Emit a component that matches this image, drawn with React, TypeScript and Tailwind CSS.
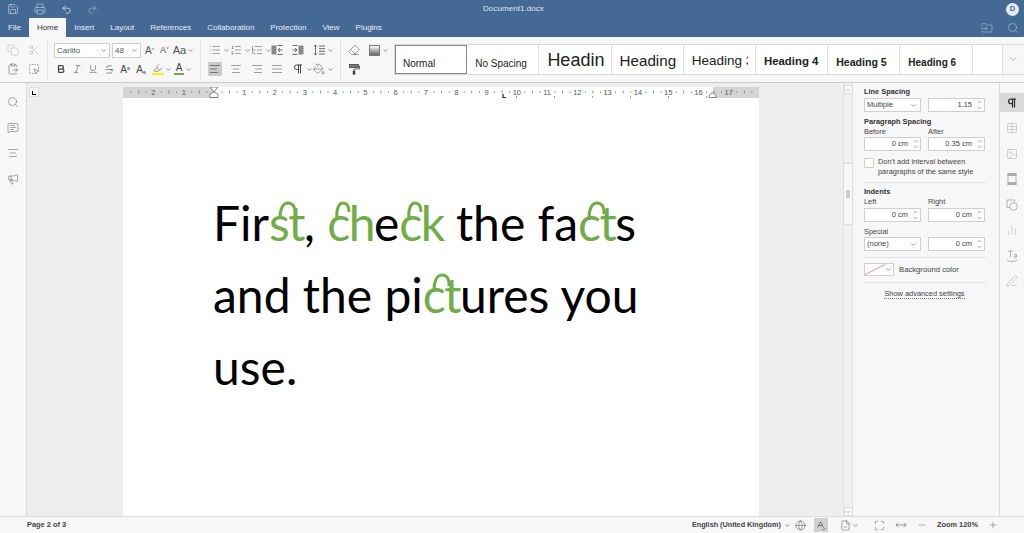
import { ChevronDown, ChevronUp, Search, Scissors, Undo2, Redo2, Save, Printer, Eraser, Globe, Minus, Plus, MessageSquareText, AlignCenter, AlignLeft, AlignRight, AlignJustify, Bold, Italic, Underline, Strikethrough, List, ListOrdered, ListTree, Copy, ClipboardPaste, SquareDashedMousePointer, Pilcrow, PaintBucket, FolderInput, Table, Image, ChartNoAxesColumn, Megaphone, FileCheck, Maximize, MoveHorizontal, SpellCheck, PenLine, Highlighter } from 'lucide-react';
import type { ReactNode } from 'react';

const tabs = ['File', 'Home', 'Insert', 'Layout', 'References', 'Collaboration', 'Protection', 'View', 'Plugins'];

const Chev = () => <ChevronDown className="w-[7px] h-[7px] text-[#555] shrink-0" strokeWidth={2} />;

const Cell = ({ children, chev, active, w = 'w-[20.800px]' }: { children: ReactNode; chev?: boolean; active?: boolean; w?: string }) => (
  <div className={`${w} h-[16px] flex items-center gap-[1px] pl-[1px] text-[#444] shrink-0`}>
    <div className={`w-[14px] h-[14px] flex items-center justify-center rounded-[1px] shrink-0 ${active ? 'bg-[#cbcbcb]' : ''}`}>{children}</div>
    {chev && <Chev />}
  </div>
);

const ic = 'w-[12px] h-[12px]';

const Sep = () => <div className="w-px h-[38px] bg-[#dfdfdf] shrink-0" />;

// small hand drawn icons, lucide has no close match for these
const IndentIcon = ({ flip }: { flip?: boolean }) => (
  <svg width="12" height="12" viewBox="0 0 12 12" className={flip ? '-scale-x-100' : ''}>
    <rect x="6.500" y="1.500" width="5" height="9" fill="#888" />
    <path d="M0.500 1.500h5M0.500 10.500h5M0.500 6h4M3 4l2 2-2 2" fill="none" stroke="#444" strokeWidth="0.800" />
  </svg>
);

const LineSpacingIcon = () => (
  <svg width="12" height="12" viewBox="0 0 12 12" fill="none" stroke="#444" strokeWidth="0.800">
    <path d="M2.500 1v10M1 2.500 2.500 1 4 2.500M1 9.500 2.500 11 4 9.500M6 2h6M6 4.700h6M6 7.300h6M6 10h6" />
  </svg>
);

const RollerIcon = () => (
  <svg width="12" height="12" viewBox="0 0 12 12" fill="none" stroke="#444">
    <rect x="1.500" y="1.500" width="9" height="3" fill="#777" strokeWidth="0.800" />
    <path d="M10.500 3h1v3H6v2" strokeWidth="0.800" />
    <rect x="5" y="8" width="2" height="3.500" fill="#444" strokeWidth="0.500" />
  </svg>
);

const ShapeIcon = () => (
  <svg width="12" height="12" viewBox="0 0 12 12" fill="none" stroke="#aaa" strokeWidth="0.900">
    <path d="M5 8.500H1V1h7.500v3.500" />
    <circle cx="7.500" cy="7.500" r="3.800" fill="#f7f7f7" />
  </svg>
);

const HeaderIcon = () => (
  <svg width="12" height="12" viewBox="0 0 12 12" fill="none" stroke="#aaa" strokeWidth="0.900">
    <rect x="2" y="0.500" width="8" height="11" />
    <rect x="2" y="0.500" width="8" height="2" fill="#aaa" />
    <rect x="2" y="9.500" width="8" height="2" fill="#aaa" />
  </svg>
);

const ArtIcon = () => (
  <svg width="12" height="12" viewBox="0 0 12 12" fill="none" stroke="#aaa" strokeWidth="0.900">
    <path d="M2 1h5M4.500 1v6.500M8 4.500h2.500v3M10.500 6H8.500v1.500h2M1 10c2.500 2 7.500 2 10 0" />
  </svg>
);

const galleryItems = [
  { label: 'Normal', cls: 'text-[10px] pt-[9px]' },
  { label: 'No Spacing', cls: 'text-[10px] pt-[9px]' },
  { label: 'Heading 1', cls: 'text-[18px] pt-[5px]' },
  { label: 'Heading 2', cls: 'text-[15.200px] pt-[6px]' },
  { label: 'Heading 3', cls: 'text-[13.500px] pt-[6px]' },
  { label: 'Heading 4', cls: 'text-[11.400px] font-bold pt-[6px]' },
  { label: 'Heading 5', cls: 'text-[10.600px] font-bold pt-[7px]' },
  { label: 'Heading 6', cls: 'text-[10px] font-bold pt-[8px]' },
];

const Ruler = () => {
  const marks = [];
  for (let i = -11; i <= 71; i++) {
    const x = 91 + i * 7.57;
    const cm = i / 4;
    if (Number.isInteger(cm)) {
      if (cm !== 0) marks.push(<text key={i} x={x} y={8} fontSize="7.5" fill="#555" textAnchor="middle" fontFamily="Liberation Sans">{Math.abs(cm)}</text>);
    } else {
      const long = i % 4 === 2 || i % 4 === -2;
      marks.push(<rect key={i} x={x} y={long ? 3.5 : 4.5} width="0.8" height={long ? 3 : 1.5} fill="#777" />);
    }
  }
  return (
    <svg width="636" height="11" viewBox="0 0 636 11" className="block">
      <rect width="636" height="11" fill="#d4d4d4" />
      <rect x="91" width="499" height="11" fill="#fff" />
      {marks}
      {[393, 431, 469, 507, 545, 583].map((x) => <rect key={x} x={x} y="9" width="0.8" height="2" fill="#888" />)}
      <path d="M87 0h8l-4 5zM87 10.5V7l4-2 4 2v3.5z" fill="#fff" stroke="#666" strokeWidth="0.8" />
      <path d="M380 7v3.5h3" fill="none" stroke="#222" strokeWidth="1.2" />
      <path d="M586 10.5h7v-2l-3.500-3-3.500 3z" fill="#fff" stroke="#666" strokeWidth="0.8" />
    </svg>
  );
};

// green ligature pair, arc drawn over the two letters
const Lig = ({ t, arc, w }: { t: string; arc: string; w: number }) => (
  <span className="relative inline-block text-[#70ad47] tracking-[-1.500px]">
    {t}
    <svg width={w} height="40" viewBox={`0 0 ${w} 40`} className="absolute left-0 top-0 overflow-visible" fill="none" stroke="#70ad47" strokeWidth="3">
      <path d={arc} />
    </svg>
  </span>
);

const ctArc = 'M11 31C11 22 14 16 19 16C24 16 26.500 20 26 27';
const stemArc = 'M10 31C9 22 12 16 16 16C20 16 22 19 22 25';

const Field = ({ value, select, w = 'w-[57px]' }: { value: string; select?: boolean; w?: string }) => (
  <div className={`${w} h-[14px] bg-white border border-[#cfcfcf] flex items-center justify-between text-[7.500px] text-[#444] ${select ? 'pl-[2px] pr-[3px]' : 'pl-[2px] pr-[1px]'}`}>
    {select ? (
      <>
        <span>{value}</span>
        <Chev />
      </>
    ) : (
      <>
        <span className="grow text-right pr-[3px]">{value}</span>
        <span className="flex flex-col w-[8px] items-center">
          <ChevronUp className="w-[7px] h-[6px] text-[#555]" />
          <ChevronDown className="w-[7px] h-[6px] text-[#555]" />
        </span>
      </>
    )}
  </div>
);

const Head = ({ children }: { children: ReactNode }) => <div className="text-[7.400px] leading-[10px] font-bold text-[#333]">{children}</div>;
const Sub = ({ children }: { children: ReactNode }) => <div className="w-[57px] text-[7.400px] leading-[10px] text-[#444]">{children}</div>;
const Rule = () => <div className="h-px bg-[#e2e2e2] -mr-[1px]" />;

export default function App() {
  return (
    <div className="w-[1024px] h-[533px] overflow-hidden flex flex-col bg-[#f7f7f7] font-['Liberation_Sans',Arial,sans-serif]">
      {/* title + tabs */}
      <header className="h-[37px] bg-[#446995] shrink-0 flex flex-col text-white">
        <div className="h-[18px] flex items-center relative">
          <div className="flex items-center pl-[7px] gap-[15px] text-[#c6d2e0]">
            <Save className="w-[12px] h-[12px]" strokeWidth={1.300} />
            <Printer className="w-[12px] h-[12px]" strokeWidth={1.300} />
            <Undo2 className="w-[11px] h-[11px]" strokeWidth={2} />
            <Redo2 className="w-[11px] h-[11px] text-[#8aa2bf]" strokeWidth={2} />
          </div>
          <div className="absolute left-[483px] top-[3px] text-[8.100px] leading-[12px] text-[#dde5ee]">Document1.docx</div>
          <div className="ml-auto mr-[5px] w-[13px] h-[13px] rounded-full bg-[#e6ebf2] text-[#446995] text-[7.500px] font-bold flex items-center justify-center">D</div>
        </div>
        <div className="h-[19px] flex items-stretch">
          <nav className="flex items-stretch text-[8px]">
            {tabs.map((t) => (
              <div key={t} className={`flex items-center px-[8px] ${t === 'Home' ? 'bg-[#f7f7f7] text-[#333] rounded-t-[1px]' : 'text-[#e8edf3]'}`}>{t}</div>
            ))}
          </nav>
          <div className="ml-auto flex items-center gap-[14px] pr-[5px] text-[#c6d2e0]">
            <FolderInput className="w-[12px] h-[12px]" strokeWidth={1} />
            <Search className="w-[12px] h-[12px]" strokeWidth={1} />
          </div>
        </div>
      </header>

      {/* toolbar */}
      <div className="h-[46px] shrink-0 flex items-center border-b border-[#cbcbcb] pl-[5px] text-[#444]">
        <div className="flex flex-col gap-[3px] w-[42px]">
          <div className="flex">
            <Cell><Copy className={`${ic} text-[#aaa]`} strokeWidth={1} /></Cell>
            <Cell><Scissors className={`${ic} text-[#aaa]`} strokeWidth={1} /></Cell>
          </div>
          <div className="flex">
            <Cell><ClipboardPaste className={ic} strokeWidth={1} /></Cell>
            <Cell><SquareDashedMousePointer className={ic} strokeWidth={1} /></Cell>
          </div>
        </div>
        <Sep />
        <div className="flex flex-col gap-[3px] w-[152px] pl-[6px]">
          <div className="flex items-center gap-[2px]">
            <div className="w-[56px] h-[15px] bg-white border border-[#cfcfcf] text-[8px] text-[#555] flex items-center justify-between pl-[2px] pr-[2px]">Carlito<Chev /></div>
            <div className="w-[29px] h-[15px] bg-white border border-[#cfcfcf] text-[8px] text-[#555] flex items-center justify-between pl-[2px] pr-[2px]">48<Chev /></div>
            <div className="flex text-[#555] text-[10px] items-center -ml-[1px]">
              <span className="w-[15px] text-center">A<sup className="text-[5px]">^</sup></span>
              <span className="w-[15px] text-center text-[9px]">A<sup className="text-[5px]">˅</sup></span>
              <span className="w-[15px] text-center text-[11px]">Aa</span>
              <Chev />
            </div>
          </div>
          <div className="flex items-center -ml-[1px]">
            <div className="w-[16px] flex justify-center"><Bold className="w-[10px] h-[10px]" strokeWidth={3} /></div>
            <div className="w-[16px] flex justify-center"><Italic className="w-[10px] h-[10px]" strokeWidth={1.300} /></div>
            <div className="w-[16px] flex justify-center"><Underline className="w-[10px] h-[10px]" strokeWidth={1.300} /></div>
            <div className="w-[16px] flex justify-center"><Strikethrough className="w-[11px] h-[11px]" strokeWidth={1.300} /></div>
            <div className="w-[16px] text-center text-[10px]">A<sup className="text-[5px]">a</sup></div>
            <div className="w-[16px] text-center text-[10px]">A<sub className="text-[5px]">a</sub></div>
            <div className="w-[22px] flex items-center pl-[3px] gap-[1px]">
              <div className="flex flex-col items-center"><Highlighter className="w-[10px] h-[10px]" strokeWidth={1.200} /><div className="w-[12px] h-[2px] bg-[#fff200]" /></div>
              <Chev />
            </div>
            <div className="w-[20px] flex items-center pl-[3px] gap-[1px]">
              <div className="flex flex-col items-center text-[10px] leading-[10px]">A<div className="w-[10px] h-[2px] bg-[#70ad47]" /></div>
              <Chev />
            </div>
          </div>
        </div>
        <Sep />
        <div className="flex flex-col gap-[3px] w-[139px] pl-[6px]">
          <div className="flex">
            <Cell chev><List className={ic} strokeWidth={1} /></Cell>
            <Cell chev><ListOrdered className={ic} strokeWidth={1} /></Cell>
            <Cell chev><ListTree className={ic} strokeWidth={1} /></Cell>
            <Cell><IndentIcon flip /></Cell>
            <Cell><IndentIcon /></Cell>
            <Cell chev><LineSpacingIcon /></Cell>
          </div>
          <div className="flex">
            <Cell active><AlignLeft className={ic} strokeWidth={1.300} /></Cell>
            <Cell><AlignCenter className={ic} strokeWidth={1} /></Cell>
            <Cell><AlignRight className={ic} strokeWidth={1} /></Cell>
            <Cell><AlignJustify className={ic} strokeWidth={1} /></Cell>
            <Cell chev><Pilcrow className={ic} strokeWidth={2} /></Cell>
            <Cell chev><PaintBucket className={ic} strokeWidth={1} /></Cell>
          </div>
        </div>
        <Sep />
        <div className="flex flex-col gap-[3px] w-[54px] pl-[5px]">
          <div className="flex">
            <Cell w="w-[20px]"><Eraser className={ic} strokeWidth={1} /></Cell>
            <Cell chev w="w-[24px]"><div className="w-[11px] h-[11px] border border-[#777] bg-gradient-to-b from-[#fff] to-[#666]" /></Cell>
          </div>
          <div className="flex">
            <Cell><RollerIcon /></Cell>
          </div>
        </div>
        <div className="flex-1 flex h-[31px] border border-[#d8d8d8] border-r-0 bg-white -ml-[1px] mt-[-1px]">
          {galleryItems.map((g, i) => (
            <div key={g.label} className={`w-[72.200px] h-full pl-[8px] pr-[7px] text-[#222] leading-[20px] border-r border-[#e0e0e0] ${g.cls} ${i === 0 ? 'outline outline-1 -outline-offset-1 outline-[#888]' : ''}`}>
              <div className="overflow-hidden whitespace-nowrap">{g.label}</div>
            </div>
          ))}
          <div className="w-[30px] border-r border-[#e0e0e0]" />
          <div className="flex-1 flex items-center justify-center bg-[#f7f7f7]"><ChevronDown className="w-[12px] h-[12px] text-[#777]" strokeWidth={1} /></div>
        </div>
      </div>

      {/* main */}
      <div className="flex-1 min-h-0 flex">
        <aside className="w-[27px] shrink-0 border-r border-[#dcdcdc] flex flex-col items-center pt-[13px] gap-[13.500px] text-[#555] pr-[1px]">
          <Search className="w-[12px] h-[12px]" strokeWidth={1} />
          <MessageSquareText className="w-[12px] h-[12px]" strokeWidth={1} />
          <AlignCenter className="w-[12px] h-[12px]" strokeWidth={1} />
          <Megaphone className="w-[12px] h-[12px]" strokeWidth={1} />
        </aside>

        <div className="w-[816px] shrink-0 bg-[#eeeeee] flex flex-col pl-[96px] relative">
          <div className="absolute left-[2px] top-[4px] w-[10px] h-[10px] bg-[#f7f7f7] border border-[#ddd] flex items-end justify-center pb-[1px]">
            <div className="w-[4px] h-[4px] border-l-[1.500px] border-b-[1.500px] border-black" />
          </div>
          <div className="pt-[4px] h-[15px] shrink-0"><Ruler /></div>
          <main className="w-[636px] flex-1 bg-white pl-[90px] pt-[89px] text-[48px] leading-[72px] text-black font-['Lato',sans-serif]">
            <div className="whitespace-nowrap">
              Fir<Lig t="st" w={36} arc={ctArc} />, <Lig t="ch" w={40} arc={stemArc} />e<Lig t="ck" w={38} arc={stemArc} /> the fa<Lig t="ct" w={36} arc={ctArc} />s
            </div>
            <div className="whitespace-nowrap">and the pi<Lig t="ct" w={36} arc={ctArc} />ures you</div>
            <div>use.</div>
          </main>
        </div>

        {/* scrollbar */}
        <div className="w-[10px] shrink-0 bg-[#f0f0f0] border-l border-r border-[#e2e2e2] flex flex-col items-center pt-[2px] relative">
          <div className="w-[9px] h-[9px] bg-[#f7f7f7] border border-[#ddd] flex items-center justify-center"><ChevronUp className="w-[6px] h-[6px] text-[#888]" /></div>
          <div className="w-[10px] h-[62px] mt-[69px] bg-[#f7f7f7] border border-[#ddd] flex items-center justify-center"><div className="w-[4px] h-[8px] bg-[#ccc]" /></div>
          <div className="w-[9px] h-[9px] mt-auto bg-[#f7f7f7] border border-[#ddd] flex items-center justify-center"><ChevronDown className="w-[6px] h-[6px] text-[#888]" /></div>
        </div>

        {/* paragraph settings */}
        <section className="w-[147px] shrink-0 border-r border-[#dcdcdc] pl-[11px] pr-[14px] pt-[4px] flex flex-col">
          <Head>Line Spacing</Head>
          <div className="flex justify-between mt-[1px]"><Field value="Multiple" select /><Field value="1.15" /></div>
          <div className="mt-[5px]"><Head>Paragraph Spacing</Head></div>
          <div className="flex justify-between"><Sub>Before</Sub><Sub>After</Sub></div>
          <div className="flex justify-between"><Field value="0 cm" /><Field value="0.35 cm" /></div>
          <div className="flex gap-[4px] mt-[6px]">
            <div className="w-[10px] h-[10px] mt-[1px] bg-white border border-[#cfcfcf] rounded-[1px] shrink-0" />
            <div className="text-[7.400px] leading-[10px] text-[#444] whitespace-nowrap">Don't add interval between<br />paragraphs of the same style</div>
          </div>
          <div className="mt-[5px]"><Rule /></div>
          <div className="mt-[4px]"><Head>Indents</Head></div>
          <div className="flex justify-between"><Sub>Left</Sub><Sub>Right</Sub></div>
          <div className="flex justify-between mt-[1px]"><Field value="0 cm" /><Field value="0 cm" /></div>
          <div className="mt-[5px]"><Sub>Special</Sub></div>
          <div className="flex justify-between"><Field value="(none)" select /><Field value="0 cm" /></div>
          <div className="mt-[6px]"><Rule /></div>
          <div className="flex items-center gap-[5px] mt-[5px] h-[13px]">
            <div className="w-[30px] h-[13px] bg-white border border-[#cfcfcf] flex items-center pr-[1px]">
              <svg width="22" height="11" viewBox="0 0 22 11"><path d="M0 11 22 0" stroke="#f0606a" strokeWidth="0.800" /></svg>
              <Chev />
            </div>
            <span className="text-[7.700px] text-[#444]">Background color</span>
          </div>
          <div className="mt-[6px]"><Rule /></div>
          <div className="mt-[3px] text-center leading-[10px]"><span className="text-[7.400px] text-[#444] border-b border-dotted border-[#777]">Show advanced settings</span></div>
        </section>

        <aside className="w-[24px] shrink-0 flex flex-col items-center pt-[10px] text-[#aaa]">
          <div className="w-[24px] h-[19px] bg-[#d9d9d9] flex items-center justify-center text-[#333]"><Pilcrow className={ic} strokeWidth={2.500} /></div>
          <div className="flex flex-col items-center gap-[13.500px] mt-[10px]">
            <Table className={ic} strokeWidth={1} />
            <Image className={ic} strokeWidth={1} />
            <HeaderIcon />
            <ShapeIcon />
            <ChartNoAxesColumn className={ic} strokeWidth={1} />
            <ArtIcon />
            <PenLine className={ic} strokeWidth={1} />
          </div>
        </aside>
      </div>

      {/* status bar */}
      <footer className="h-[17px] shrink-0 border-t border-[#dcdcdc] flex items-center text-[7.400px] text-[#444]">
        <span className="pl-[27px] font-bold">Page 2 of 3</span>
        <div className="ml-auto flex items-center pr-[26px]">
          <span className="font-bold text-[7.250px]">English (United Kingdom)</span>
          <span className="ml-[3px]"><Chev /></span>
          <Globe className="w-[11px] h-[11px] ml-[4px]" strokeWidth={1} />
          <div className="w-[14px] h-[14px] ml-[8px] bg-[#d0d0d0] flex items-center justify-center"><SpellCheck className="w-[11px] h-[11px]" strokeWidth={1.300} /></div>
          <FileCheck className="w-[11px] h-[11px] ml-[12px]" strokeWidth={1} />
          <span className="ml-[1px]"><Chev /></span>
          <Maximize className="w-[11px] h-[11px] ml-[15px]" strokeWidth={1} />
          <MoveHorizontal className="w-[12px] h-[12px] ml-[10px]" strokeWidth={1} />
          <Minus className="w-[10px] h-[10px] ml-[10px]" strokeWidth={1} />
          <span className="ml-[10px] font-bold">Zoom 120%</span>
          <Plus className="w-[10px] h-[10px] ml-[10px]" strokeWidth={1} />
        </div>
      </footer>
    </div>
  );
}
